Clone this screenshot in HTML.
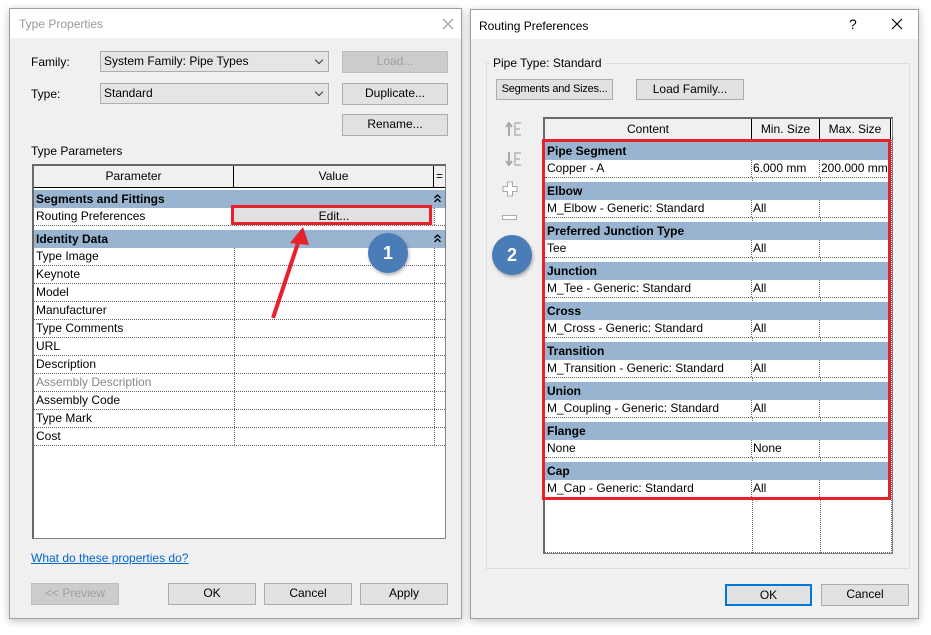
<!DOCTYPE html>
<html><head><meta charset="utf-8"><style>
*{margin:0;padding:0;box-sizing:border-box}
body{width:931px;height:635px;background:#fff;position:relative;overflow:hidden;font-family:"Liberation Sans",sans-serif;font-size:12px;color:#000}
.a{position:absolute}
.dlg{position:absolute;background:#f0f0f0;border:1px solid #a0a0a0;box-shadow:0 2px 8px rgba(0,0,0,.25)}
.tb{position:absolute;left:0;right:0;top:0;height:29px;background:#fff}
.btn{position:absolute;background:#e1e1e1;border:1px solid #adadad;text-align:center;line-height:19px;font-size:12px;white-space:nowrap}
.dis{color:#a0a0a0;background:#cccccc;border-color:#bfbfbf}
.cmb{position:absolute;background:#e5e5e5;border:1px solid #adadad;line-height:19px;padding-left:3px}
.cmb:after{content:"";position:absolute;right:6px;top:5px;width:5px;height:5px;border-right:1px solid #333;border-bottom:1px solid #333;transform:rotate(45deg)}
.tbl{position:absolute;background:#fff;border:1px solid #828282;border-left:2px solid #696969;border-top:2px solid #696969}
.hd{position:absolute;background:#f0f0f0;border-right:1px solid #000;border-bottom:1px solid #000;text-align:center;line-height:20px}
.grp{position:absolute;background:#98b4d0;font-weight:bold;line-height:18px;padding-left:2px;height:18px}
.row{position:absolute;border-bottom:1px dotted #666;line-height:17px;padding-left:2px;background:#fff}
.vl{position:absolute;top:0;bottom:0;border-left:1px dotted #666}
.circ{position:absolute;width:40px;height:40px;border-radius:50%;background:#4a7db8;color:#fff;font-weight:bold;font-size:18px;text-align:center;line-height:40px;box-shadow:1px 2px 3px rgba(0,0,0,.3)}
.chev{position:absolute;right:4px;top:4px}
</style></head><body>

<!-- LEFT DIALOG -->
<div class="dlg" style="left:9px;top:8px;width:453px;height:611px">
 <div class="tb"></div>
 <div class="a" style="left:9px;top:8px;color:#999;font-size:12px">Type Properties</div>
 <svg class="a" style="left:432px;top:9px" width="12" height="12"><path d="M1 1L11 11M11 1L1 11" stroke="#999" stroke-width="1.2"/></svg>
 <div class="a" style="left:21px;top:46px">Family:</div>
 <div class="a" style="left:21px;top:78px">Type:</div>
 <div class="cmb" style="left:90px;top:42px;width:229px;height:21px">System Family: Pipe Types</div>
 <div class="cmb" style="left:90px;top:74px;width:229px;height:21px">Standard</div>
 <div class="btn dis" style="left:332px;top:42px;width:106px;height:22px">Load...</div>
 <div class="btn" style="left:332px;top:74px;width:106px;height:22px">Duplicate...</div>
 <div class="btn" style="left:332px;top:105px;width:106px;height:22px">Rename...</div>
 <div class="a" style="left:21px;top:135px">Type Parameters</div>
 <div class="tbl" style="left:22px;top:155px;width:414px;height:375px">
  <div class="hd" style="left:0;top:0;width:200px;height:22px">Parameter</div>
  <div class="hd" style="left:200px;top:0;width:200px;height:22px">Value</div>
  <div class="hd" style="left:400px;top:0;width:11px;height:22px;border-right:none">=</div>
  <div class="grp" style="left:0;top:24px;width:411px">Segments and Fittings<svg class="chev" width="7" height="9"><path d="M0.5 4L3.5 1L6.5 4M0.5 8L3.5 5L6.5 8" stroke="#000" fill="none" stroke-width="1.3"/></svg></div>
  <div class="row" style="left:0;top:42px;width:411px;height:18px">Routing Preferences<div class="vl" style="left:200px"></div><div class="vl" style="left:400px"></div>
   <div class="a" style="left:200px;top:0;width:200px;height:17px;background:#e1e1e1;text-align:center">Edit...</div></div>
  <div class="grp" style="left:0;top:64px;width:411px">Identity Data<svg class="chev" width="7" height="9"><path d="M0.5 4L3.5 1L6.5 4M0.5 8L3.5 5L6.5 8" stroke="#000" fill="none" stroke-width="1.3"/></svg></div>
  <div class="row" style="left:0;top:82px;width:411px;height:18px">Type Image<div class="vl" style="left:200px"></div><div class="vl" style="left:400px"></div></div>
  <div class="row" style="left:0;top:100px;width:411px;height:18px">Keynote<div class="vl" style="left:200px"></div><div class="vl" style="left:400px"></div></div>
  <div class="row" style="left:0;top:118px;width:411px;height:18px">Model<div class="vl" style="left:200px"></div><div class="vl" style="left:400px"></div></div>
  <div class="row" style="left:0;top:136px;width:411px;height:18px">Manufacturer<div class="vl" style="left:200px"></div><div class="vl" style="left:400px"></div></div>
  <div class="row" style="left:0;top:154px;width:411px;height:18px">Type Comments<div class="vl" style="left:200px"></div><div class="vl" style="left:400px"></div></div>
  <div class="row" style="left:0;top:172px;width:411px;height:18px">URL<div class="vl" style="left:200px"></div><div class="vl" style="left:400px"></div></div>
  <div class="row" style="left:0;top:190px;width:411px;height:18px">Description<div class="vl" style="left:200px"></div><div class="vl" style="left:400px"></div></div>
  <div class="row" style="left:0;top:208px;width:411px;height:18px;color:#888">Assembly Description<div class="vl" style="left:200px"></div><div class="vl" style="left:400px"></div></div>
  <div class="row" style="left:0;top:226px;width:411px;height:18px">Assembly Code<div class="vl" style="left:200px"></div><div class="vl" style="left:400px"></div></div>
  <div class="row" style="left:0;top:244px;width:411px;height:18px">Type Mark<div class="vl" style="left:200px"></div><div class="vl" style="left:400px"></div></div>
  <div class="row" style="left:0;top:262px;width:411px;height:18px">Cost<div class="vl" style="left:200px"></div><div class="vl" style="left:400px"></div></div>
 </div>
 <div class="a" style="left:21px;top:542px;color:#0066cc;text-decoration:underline">What do these properties do?</div>
 <div class="btn dis" style="left:21px;top:574px;width:88px;height:22px">&lt;&lt; Preview</div>
 <div class="btn" style="left:158px;top:574px;width:88px;height:22px">OK</div>
 <div class="btn" style="left:254px;top:574px;width:88px;height:22px">Cancel</div>
 <div class="btn" style="left:350px;top:574px;width:88px;height:22px">Apply</div>
</div>
<div class="a" style="left:231px;top:205px;width:201px;height:20px;border:3px solid #e8202a"></div>

<!-- RIGHT DIALOG -->
<div class="dlg" style="left:470px;top:9px;width:449px;height:610px">
 <div class="tb"></div>
 <div class="a" style="left:8px;top:9px">Routing Preferences</div>
 <div class="a" style="left:378px;top:6px;font-size:14px">?</div>
 <svg class="a" style="left:420px;top:8px" width="12" height="12"><path d="M1 1L11 11M11 1L1 11" stroke="#000" stroke-width="1.2"/></svg>
 <div class="a" style="left:15px;top:53px;width:424px;height:506px;border:1px solid #dcdcdc"></div>
 <div class="a" style="left:19px;top:46px;background:#f0f0f0;padding:0 3px">Pipe Type: Standard</div>
 <div class="btn" style="left:25px;top:69px;width:117px;height:21px;line-height:18px;font-size:11px;letter-spacing:-0.2px">Segments and Sizes...</div>
 <div class="btn" style="left:165px;top:69px;width:108px;height:21px;line-height:18px">Load Family...</div>
 <svg class="a" style="left:34px;top:111px" width="20" height="16"><path d="M4 15V3M1 6L4 2L7 6" stroke="#a8a8a8" stroke-width="2" fill="none"/><path d="M16 2H10V14H16M10 8H15" stroke="#a8a8a8" stroke-width="1.2" fill="none"/></svg>
 <svg class="a" style="left:34px;top:141px" width="20" height="16"><path d="M4 1V13M1 10L4 14L7 10" stroke="#a8a8a8" stroke-width="2" fill="none"/><path d="M16 2H10V14H16M10 8H15" stroke="#a8a8a8" stroke-width="1.2" fill="none"/></svg>
 <svg class="a" style="left:31px;top:171px" width="16" height="16"><path d="M5.5 1H10.5V5.5H15V10.5H10.5V15H5.5V10.5H1V5.5H5.5Z" fill="#fff" stroke="#aaa" stroke-width="1"/></svg>
 <div class="a" style="left:31px;top:205px;width:15px;height:5px;border:1px solid #aaa;background:#fff"></div>
 <div class="tbl" style="left:72px;top:107px;width:350px;height:437px">
  <div class="hd" style="left:0;top:0;width:207px;height:21px">Content</div>
  <div class="hd" style="left:207px;top:0;width:68px;height:21px">Min. Size</div>
  <div class="hd" style="left:275px;top:0;width:71px;height:21px">Max. Size</div>
  <div class="vl" style="left:207px;top:21px"></div><div class="vl" style="left:275px;top:21px"></div><div class="vl" style="left:346px;top:21px"></div>
  <div class="a" style="left:0;right:0;bottom:0;border-bottom:1px dotted #666"></div>
 </div>
</div>
<div class="a" style="left:545px;top:142px;width:344px">
 <div class="grp" style="left:0;top:0;width:344px">Pipe Segment</div>
 <div class="row" style="left:0;top:18px;width:344px;height:18px">Copper - A<div class="vl" style="left:206px"></div><div class="vl" style="left:274px"></div><span class="a" style="left:208px">6.000 mm</span><span class="a" style="left:276px">200.000 mm</span></div>
 <div class="grp" style="left:0;top:40px;width:344px">Elbow</div>
 <div class="row" style="left:0;top:58px;width:344px;height:18px">M_Elbow - Generic: Standard<div class="vl" style="left:206px"></div><div class="vl" style="left:274px"></div><span class="a" style="left:208px">All</span></div>
 <div class="grp" style="left:0;top:80px;width:344px">Preferred Junction Type</div>
 <div class="row" style="left:0;top:98px;width:344px;height:18px">Tee<div class="vl" style="left:206px"></div><div class="vl" style="left:274px"></div><span class="a" style="left:208px">All</span></div>
 <div class="grp" style="left:0;top:120px;width:344px">Junction</div>
 <div class="row" style="left:0;top:138px;width:344px;height:18px">M_Tee - Generic: Standard<div class="vl" style="left:206px"></div><div class="vl" style="left:274px"></div><span class="a" style="left:208px">All</span></div>
 <div class="grp" style="left:0;top:160px;width:344px">Cross</div>
 <div class="row" style="left:0;top:178px;width:344px;height:18px">M_Cross - Generic: Standard<div class="vl" style="left:206px"></div><div class="vl" style="left:274px"></div><span class="a" style="left:208px">All</span></div>
 <div class="grp" style="left:0;top:200px;width:344px">Transition</div>
 <div class="row" style="left:0;top:218px;width:344px;height:18px">M_Transition - Generic: Standard<div class="vl" style="left:206px"></div><div class="vl" style="left:274px"></div><span class="a" style="left:208px">All</span></div>
 <div class="grp" style="left:0;top:240px;width:344px">Union</div>
 <div class="row" style="left:0;top:258px;width:344px;height:18px">M_Coupling - Generic: Standard<div class="vl" style="left:206px"></div><div class="vl" style="left:274px"></div><span class="a" style="left:208px">All</span></div>
 <div class="grp" style="left:0;top:280px;width:344px">Flange</div>
 <div class="row" style="left:0;top:298px;width:344px;height:18px">None<div class="vl" style="left:206px"></div><div class="vl" style="left:274px"></div><span class="a" style="left:208px">None</span></div>
 <div class="grp" style="left:0;top:320px;width:344px">Cap</div>
 <div class="row" style="left:0;top:338px;width:344px;height:18px">M_Cap - Generic: Standard<div class="vl" style="left:206px"></div><div class="vl" style="left:274px"></div><span class="a" style="left:208px">All</span></div>
</div>
<div class="a" style="left:542px;top:139px;width:349px;height:361px;border:3px solid #e8202a"></div>
<div class="btn" style="left:725px;top:584px;width:87px;height:22px;border:2px solid #0078d7;line-height:18px">OK</div>
<div class="btn" style="left:821px;top:584px;width:88px;height:22px">Cancel</div>

<!-- annotations -->
<svg class="a" style="left:0;top:0" width="931" height="635">
 <line x1="273" y1="318" x2="299" y2="240" stroke="#e8202a" stroke-width="4"/>
 <polygon points="303,227 290,243 309,245" fill="#e8202a"/>
</svg>
<div class="circ" style="left:368px;top:233px">1</div>
<div class="circ" style="left:492px;top:235px">2</div>
</body></html>
